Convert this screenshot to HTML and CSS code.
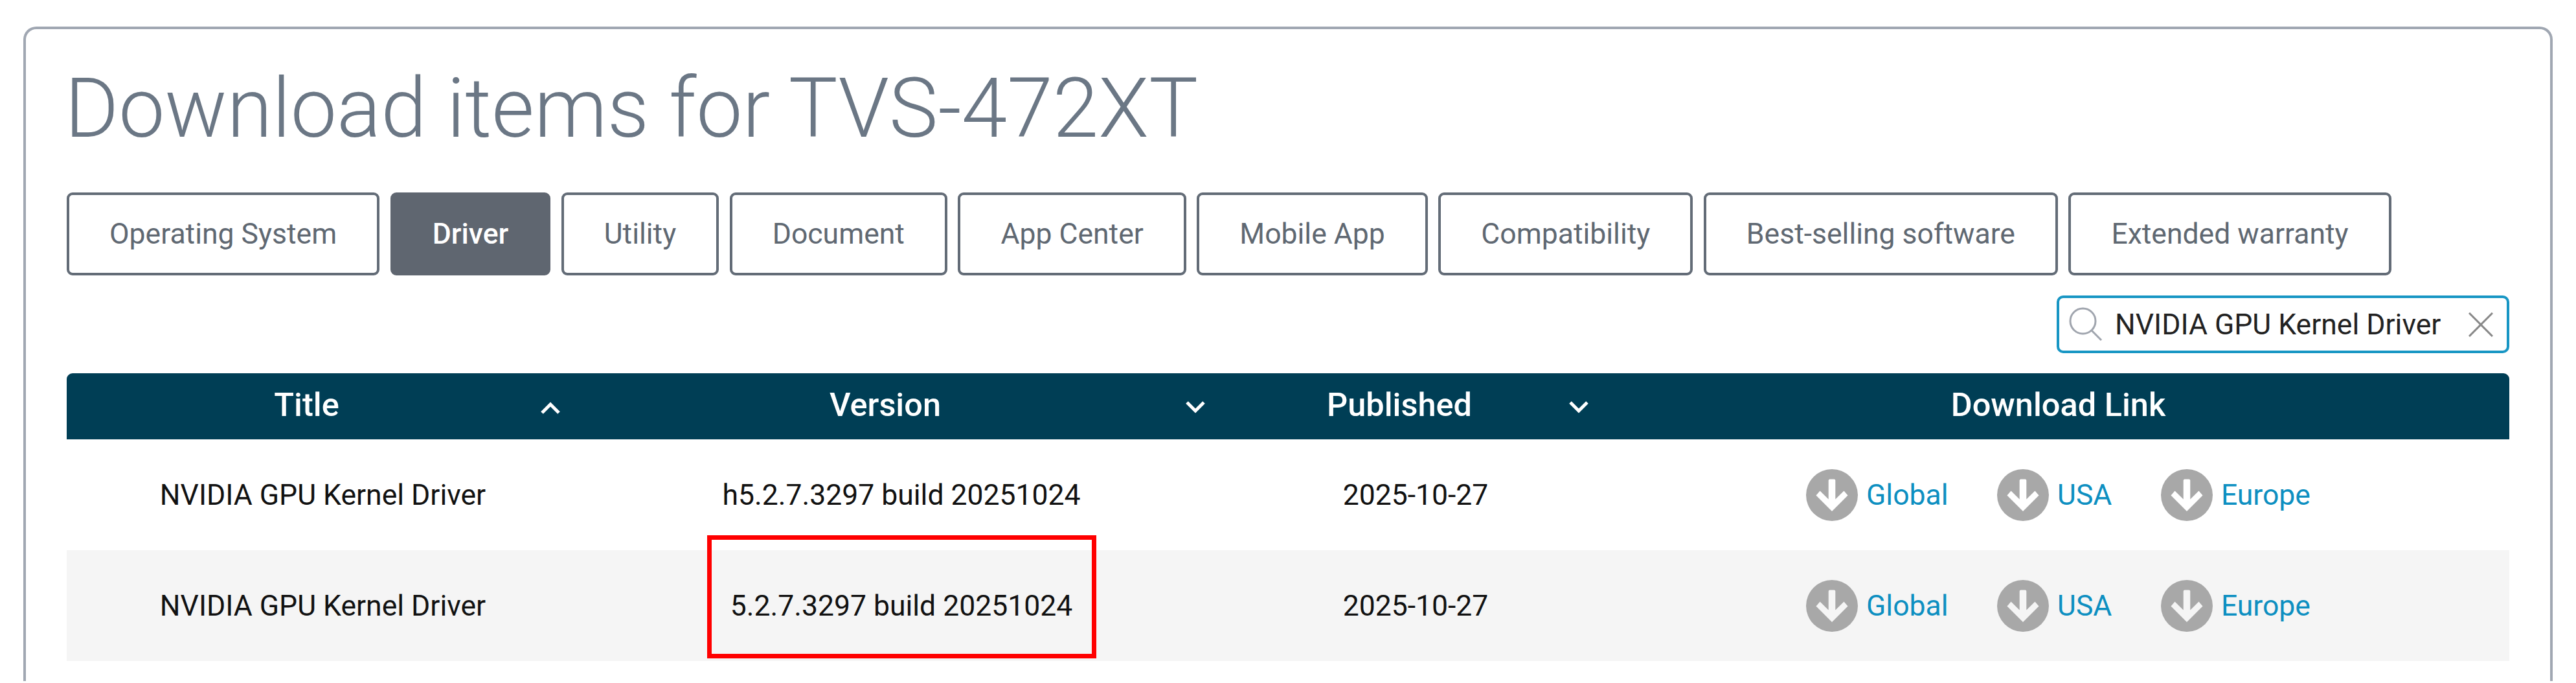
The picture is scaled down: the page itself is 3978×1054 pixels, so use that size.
FILE: index.html
```html
<!DOCTYPE html>
<html lang="en">
<head>
    <meta charset="UTF-8">
    <meta name="viewport" content="width=device-width, initial-scale=1.0">
    <title>Download items for TVS-472XT</title>
    <link rel="stylesheet" href="styles.css">
</head>
<body>
    <svg class="sprite" xmlns="http://www.w3.org/2000/svg">
        <symbol id="icon-download" viewBox="0 0 80 80">
            <path fill-rule="evenodd" d="M40 0a40 40 0 1 0 0 80a40 40 0 1 0 0-80zM34.700 17.500a2 2 0 0 1 2-2h6.600a2 2 0 0 1 2 2V46.500L58.500 33.500L64.500 40.500L40 65L15.500 40.500L21.500 33.500L34.700 46.500z"/>
        </symbol>
    </svg>

    <div class="panel">
        <h1 class="panel-title">Download items for TVS-472XT</h1>

        <div class="tabs">
            <button class="tab">Operating System</button>
            <button class="tab active">Driver</button>
            <button class="tab">Utility</button>
            <button class="tab">Document</button>
            <button class="tab">App Center</button>
            <button class="tab">Mobile App</button>
            <button class="tab">Compatibility</button>
            <button class="tab">Best-selling software</button>
            <button class="tab">Extended warranty</button>
        </div>

        <div class="search-row">
            <div class="search-box">
                <svg class="search-icon" viewBox="0 0 52 53"><circle cx="21.500" cy="21.500" r="19.500"/><path d="M35 36L50 51"/></svg>
                <span class="search-text">NVIDIA GPU Kernel Driver</span>
                <svg class="clear-icon" viewBox="0 0 38 38"><path d="M1 1L37 37M37 1L1 37"/></svg>
            </div>
        </div>

        <div class="download-table">
            <div class="row table-head">
                <div class="cell sortable">Title <svg class="caret" viewBox="0 0 30 20"><path d="M2 18L15 5L28 18"/></svg></div>
                <div class="cell sortable">Version <svg class="caret" viewBox="0 0 30 20"><path d="M2 2L15 15L28 2"/></svg></div>
                <div class="cell sortable">Published <svg class="caret" viewBox="0 0 30 20"><path d="M2 2L15 15L28 2"/></svg></div>
                <div class="cell">Download Link</div>
            </div>
            <div class="row">
                <div class="cell">NVIDIA GPU Kernel Driver</div>
                <div class="cell">h5.2.7.3297 build 20251024</div>
                <div class="cell">2025-10-27</div>
                <div class="cell links">
                    <a class="link"><svg class="download-icon"><use href="#icon-download"/></svg>Global</a>
                    <a class="link"><svg class="download-icon"><use href="#icon-download"/></svg>USA</a>
                    <a class="link"><svg class="download-icon"><use href="#icon-download"/></svg>Europe</a>
                </div>
            </div>
            <div class="row striped">
                <div class="cell">NVIDIA GPU Kernel Driver</div>
                <div class="cell marked">5.2.7.3297 build 20251024<span class="highlight"></span></div>
                <div class="cell">2025-10-27</div>
                <div class="cell links">
                    <a class="link"><svg class="download-icon"><use href="#icon-download"/></svg>Global</a>
                    <a class="link"><svg class="download-icon"><use href="#icon-download"/></svg>USA</a>
                    <a class="link"><svg class="download-icon"><use href="#icon-download"/></svg>Europe</a>
                </div>
            </div>
        </div>
    </div>
</body>
</html>
```

FILE: styles.css
```css
* {
    margin: 0;
    padding: 0;
    box-sizing: border-box;
}

body {
    font-family: Roboto, 'Liberation Sans', sans-serif;
    font-size: 44.5px;
    background: #fff;
    color: #111;
}

.sprite {
    display: none;
}

.panel {
    height: 1010px;
    margin: 41px 36px 0;
    padding: 0 63px;
    border: 4px solid #a0a7b2;
    border-bottom: none;
    border-radius: 20px 20px 0 0;
}

.panel-title {
    height: 252px;
    margin-left: -3px;
    padding-top: 48px;
    line-height: 150px;
    font-size: 127.1px;
    font-weight: 300;
    color: #6b7785;
    white-space: nowrap;
}

.tabs {
    display: flex;
    gap: 16.5px;
}

.tab {
    height: 128px;
    padding: 0 62px;
    border: 4px solid #636c77;
    border-radius: 9px;
    background: #fff;
    color: #5f6872;
    font-family: inherit;
    font-size: 44.5px;
    white-space: nowrap;
}

.tab.active {
    padding: 0 61px;
    background: #5f6670;
    border-color: #5f6670;
    color: #fff;
    font-weight: 500;
}

.search-row {
    display: flex;
    justify-content: flex-end;
    margin-top: 31px;
}

.search-box {
    display: flex;
    align-items: center;
    width: 699px;
    height: 89px;
    padding: 0 21px 0 15px;
    border: 4px solid #1896c4;
    border-radius: 10px;
    color: #222;
}

.search-icon {
    width: 52px;
    height: 53px;
    fill: none;
    stroke: #a0a5ae;
    stroke-width: 3;
}

.search-text {
    margin-left: 19px;
    white-space: nowrap;
}

.clear-icon {
    width: 38px;
    height: 38px;
    margin-left: auto;
    fill: none;
    stroke: #888;
    stroke-width: 3;
}

.download-table {
    margin-top: 31px;
}

.row {
    display: grid;
    grid-template-columns: 791px 996px 592px 1fr;
    height: 171px;
}

.striped {
    background: #f5f5f5;
}

.cell {
    display: flex;
    align-items: center;
    justify-content: center;
    white-space: nowrap;
}

.table-head {
    height: 102px;
    border-radius: 9px 9px 0 0;
    background: #003e55;
    color: #fff;
    font-size: 50.5px;
    font-weight: 500;
}

.table-head .cell {
    position: relative;
    padding-bottom: 5px;
}

.table-head .sortable {
    padding-right: 50px;
}

.caret {
    position: absolute;
    right: 29px;
    top: 43px;
    width: 30px;
    height: 20px;
    fill: none;
    stroke: #fff;
    stroke-width: 5;
}

.links {
    gap: 75.5px;
}

.link {
    display: flex;
    align-items: center;
    gap: 13px;
    color: #0d8fc1;
}

.download-icon {
    width: 80px;
    height: 80px;
    fill: #a8a8a8;
}

.marked {
    position: relative;
}

/* red frame around the current build */
.highlight {
    position: absolute;
    left: 198px;
    top: -23px;
    width: 601px;
    height: 190px;
    border: 7px solid #f00;
}
```
